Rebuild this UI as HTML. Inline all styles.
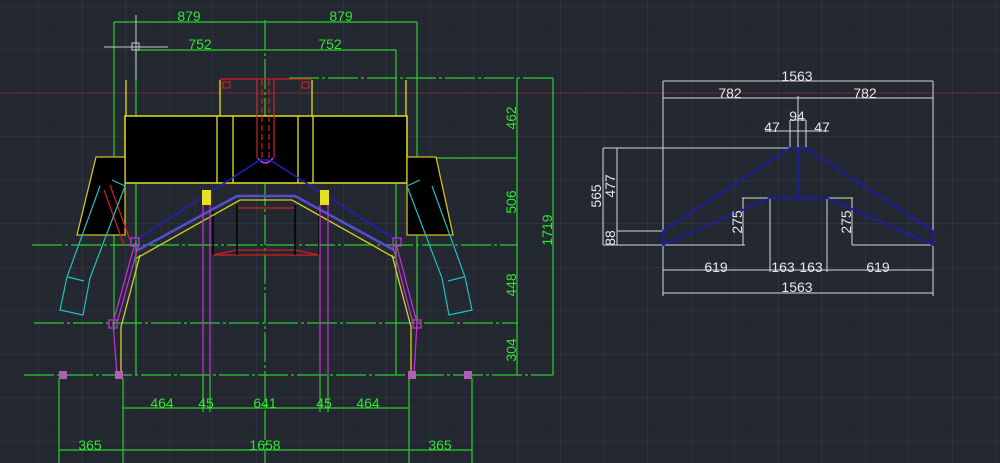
<!DOCTYPE html>
<html><head><meta charset="utf-8"><style>
html,body{margin:0;padding:0;background:#222730;}
svg{display:block;}
text{font-family:"Liberation Sans",sans-serif;font-size:14px;}
.g{fill:#2ee82e;} .w{fill:#e6e6e6;}
</style></head><body>
<svg width="1000" height="463" viewBox="0 0 1000 463" xmlns="http://www.w3.org/2000/svg">
<defs>
<pattern id="minor" x="38.5" y="6" width="8.7" height="8.7" patternUnits="userSpaceOnUse">
<path d="M0 0H8.7M0 0V8.7" stroke="#292f39" stroke-width="1" fill="none"/>
</pattern>
<pattern id="major" x="38.5" y="6" width="43.5" height="43.5" patternUnits="userSpaceOnUse">
<path d="M0 0H43.5M0 0V43.5" stroke="#363d48" stroke-width="1" fill="none"/>
</pattern>
</defs>
<rect width="1000" height="463" fill="#222730"/>
<rect width="1000" height="463" fill="url(#minor)"/>
<rect width="1000" height="463" fill="url(#major)"/>
<line x1="0" y1="93" x2="1000" y2="93" stroke="#7a2a30" stroke-width="1"/>

<g stroke="#2ecc2e" stroke-width="1.2" fill="none">
<line x1="114" y1="22" x2="417" y2="22"/>
<line x1="136" y1="50" x2="396" y2="50"/>
<line x1="265" y1="20" x2="265" y2="463" stroke-dasharray="30 3 3 3"/>
<line x1="114" y1="22" x2="114" y2="330"/>
<line x1="417" y1="22" x2="417" y2="330"/>
<line x1="396" y1="50" x2="396" y2="375"/>
<line x1="136" y1="50" x2="136" y2="375"/>
<line x1="289" y1="78" x2="553" y2="78" stroke-dasharray="30 3 3 3"/>
<line x1="517" y1="78" x2="517" y2="375"/>
<line x1="553" y1="78" x2="553" y2="375"/>
<line x1="436" y1="158" x2="517" y2="158"/>
<line x1="32" y1="245" x2="518" y2="245" stroke-dasharray="30 3 3 3"/>
<line x1="34" y1="323" x2="518" y2="323" stroke-dasharray="30 3 3 3"/>
<line x1="24" y1="375" x2="553" y2="375" stroke-dasharray="30 3 3 3"/>
<line x1="123" y1="408" x2="409" y2="408"/>
<line x1="59" y1="450" x2="472" y2="450"/>
<line x1="59" y1="378" x2="59" y2="463"/>
<line x1="123" y1="378" x2="123" y2="463"/>
<line x1="409" y1="378" x2="409" y2="463"/>
<line x1="472" y1="378" x2="472" y2="463"/>
<line x1="203" y1="375" x2="203" y2="412"/><line x1="210" y1="375" x2="210" y2="412"/>
<line x1="320" y1="375" x2="320" y2="412"/><line x1="328" y1="375" x2="328" y2="412"/>
</g>
<g stroke="#c8c8c8" stroke-width="1">
<line x1="104" y1="47" x2="168" y2="47"/><line x1="136" y1="15" x2="136" y2="79"/>
<rect x="132" y="43" width="7" height="7" fill="none"/>
</g>

<rect x="125" y="116" width="282" height="67" fill="#000" stroke="#e0e020" stroke-width="1.5"/>
<g stroke="#e0e020" stroke-width="1.3">
<line x1="217" y1="116" x2="217" y2="183"/><line x1="233" y1="116" x2="233" y2="183"/>
<line x1="298" y1="116" x2="298" y2="183"/><line x1="313" y1="116" x2="313" y2="183"/>
<line x1="126" y1="80" x2="126" y2="116"/><line x1="406" y1="80" x2="406" y2="116"/>
<line x1="220" y1="80" x2="220" y2="116"/><line x1="312" y1="80" x2="312" y2="116"/>
</g>
<polygon points="96,157 125,157 125,235 77,235" fill="#000" stroke="#d0c020" stroke-width="1.3"/>
<polygon points="407,157 436,157 453,235 407,235" fill="#000" stroke="#d0c020" stroke-width="1.3"/>
<g stroke="#d02020" stroke-width="1.2" fill="none">
<line x1="220" y1="79" x2="312" y2="79"/>
<rect x="223" y="82" width="7" height="6"/><rect x="302" y="82" width="7" height="6"/>
<line x1="257" y1="80" x2="257" y2="158"/><line x1="274" y1="80" x2="274" y2="158"/>
<line x1="262" y1="80" x2="262" y2="158" stroke-dasharray="6 3"/><line x1="269" y1="80" x2="269" y2="158" stroke-dasharray="6 3"/>
<line x1="238" y1="208" x2="295" y2="208"/>
<polyline points="213,255 237,250 295,250 319,255 213,255"/>
<line x1="110" y1="185" x2="130" y2="240"/><line x1="104" y1="190" x2="124" y2="245"/>
</g>
<path d="M258 158 Q265 168 273 158" stroke="#c040e0" fill="none" stroke-width="1.5"/>
<g stroke="#000" stroke-width="1.5" fill="none">
<line x1="237" y1="205" x2="237" y2="255"/><line x1="295" y1="205" x2="295" y2="255"/>
<line x1="213" y1="210" x2="213" y2="255"/><line x1="319" y1="210" x2="319" y2="255"/>
</g>
<g stroke="#2020c0" stroke-width="1.5" fill="none">
<polyline points="136,240 260,160 270,160 396,240"/>
</g>
<g stroke="#5050d0" stroke-width="2.5" fill="none">
<polyline points="138,250 237,196 295,196 394,250"/>
</g>
<g stroke="#d8d020" stroke-width="1.3" fill="none">
<polyline points="137,258 240,200 292,200 395,258"/>
<polyline points="140,255 121,327 121,375"/>
<polyline points="392,255 411,327 411,375"/>
</g>
<rect x="202" y="190" width="9" height="15" fill="#e8e020"/>
<rect x="320" y="190" width="9" height="15" fill="#e8e020"/>
<g stroke="#c030d0" stroke-width="1.3" fill="none">
<line x1="203" y1="205" x2="203" y2="375"/><line x1="210" y1="205" x2="210" y2="375"/>
<line x1="320" y1="205" x2="320" y2="375"/><line x1="328" y1="205" x2="328" y2="375"/>
<polyline points="135,243 113,323 117,375"/><polyline points="138,247 117,323"/>
<polyline points="396,243 417,323 414,375"/><polyline points="393,247 413,323"/>
<rect x="131" y="238" width="8" height="8"/><rect x="393" y="238" width="8" height="8"/>
<rect x="109" y="320" width="8" height="8"/><rect x="413" y="320" width="8" height="8"/>
</g>
<g stroke="#20c0c0" stroke-width="1.2" fill="none">
<polyline points="112,180 125,186 90,278 83,315 60,310 67,277 100,186"/>
<line x1="68" y1="277" x2="84" y2="281"/>
<polyline points="420,180 407,186 442,278 449,315 472,310 465,277 432,186"/>
<line x1="448" y1="281" x2="464" y2="277"/>
</g>
<g fill="#b060b0">
<rect x="59" y="371" width="8" height="8"/><rect x="115" y="371" width="8" height="8"/>
<rect x="408" y="371" width="8" height="8"/><rect x="464" y="371" width="8" height="8"/>
</g>

<g class="g" text-anchor="middle">
<text x="189" y="21">879</text><text x="341" y="21">879</text>
<text x="200" y="49">752</text><text x="330" y="49">752</text>
<text x="162" y="408">464</text><text x="206" y="408">45</text><text x="265" y="408">641</text>
<text x="324" y="408">45</text><text x="368" y="408">464</text>
<text x="90" y="450">365</text><text x="265" y="450">1658</text><text x="440" y="450">365</text>
<text transform="translate(516,118) rotate(-90)">462</text>
<text transform="translate(516,202) rotate(-90)">506</text>
<text transform="translate(516,285) rotate(-90)">448</text>
<text transform="translate(516,350) rotate(-90)">304</text>
<text transform="translate(552,230) rotate(-90)">1719</text>
</g>

<g stroke="#d8d8d8" stroke-width="1" fill="none">
<line x1="663" y1="81" x2="933" y2="81"/>
<line x1="663" y1="98" x2="933" y2="98"/>
<line x1="663" y1="293" x2="933" y2="293"/>
<line x1="663" y1="270" x2="933" y2="270"/>
<line x1="663" y1="81" x2="663" y2="296"/><line x1="933" y1="81" x2="933" y2="296"/>
<line x1="798" y1="96" x2="798" y2="198"/>
<line x1="790" y1="120" x2="790" y2="148"/><line x1="806" y1="120" x2="806" y2="148"/>
<line x1="765" y1="131" x2="829" y2="131"/>
<line x1="790" y1="120" x2="806" y2="120"/>
<line x1="603" y1="148" x2="790" y2="148"/>
<line x1="603" y1="148" x2="603" y2="245"/><line x1="617" y1="148" x2="617" y2="245"/>
<line x1="617" y1="231" x2="663" y2="231"/>
<line x1="603" y1="245" x2="745" y2="245"/>
<line x1="852" y1="245" x2="933" y2="245"/>
<line x1="742" y1="198" x2="770" y2="198"/><line x1="827" y1="198" x2="853" y2="198"/>
<line x1="770" y1="198" x2="770" y2="272"/><line x1="827" y1="198" x2="827" y2="272"/>
<line x1="743" y1="198" x2="743" y2="245"/><line x1="852" y1="198" x2="852" y2="245"/>
</g>
<g stroke="#1c1cb0" stroke-width="1.8" fill="none">
<polygon points="663,231 790,148 806,148 933,231 933,245 827,198 770,198 663,245"/>
<line x1="798" y1="148" x2="798" y2="198"/>
<line x1="770" y1="198" x2="827" y2="198"/>
</g>
<g class="w" text-anchor="middle">
<text x="797" y="81">1563</text>
<text x="730" y="98">782</text><text x="865" y="98">782</text>
<text x="797" y="121">94</text>
<text x="772" y="132">47</text><text x="822" y="132">47</text>
<text x="716" y="272">619</text><text x="783" y="272">163</text><text x="811" y="272">163</text><text x="878" y="272">619</text>
<text x="797" y="292">1563</text>
<text transform="translate(601,196) rotate(-90)">565</text>
<text transform="translate(615,186) rotate(-90)">477</text>
<text transform="translate(615,238) rotate(-90)">88</text>
<text transform="translate(742,222) rotate(-90)">275</text>
<text transform="translate(851,222) rotate(-90)">275</text>
</g>
</svg>
</body></html>
